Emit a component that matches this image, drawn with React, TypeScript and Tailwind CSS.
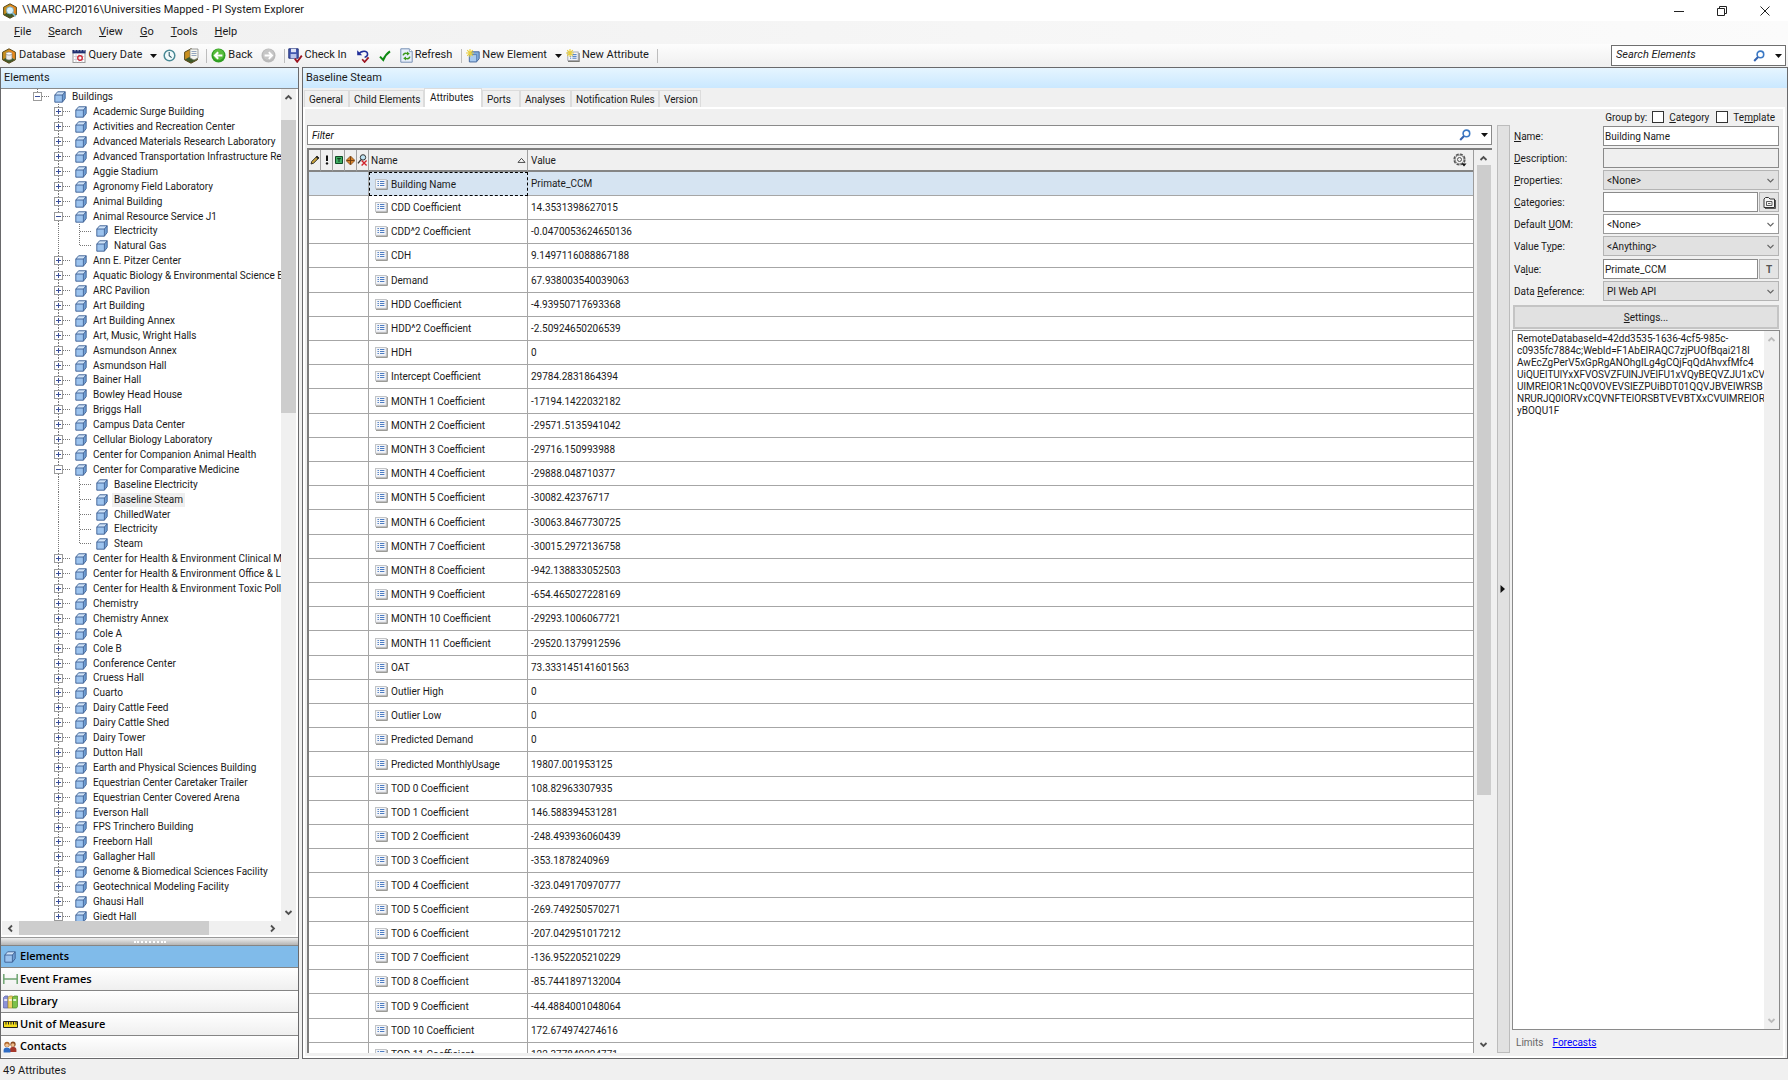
import type { ReactNode } from "react";

interface TreeItem {
  label: string;
  level?: 0 | 1 | 2;
  open?: boolean;
  last?: boolean;
  selected?: boolean;
}

const treeItems: TreeItem[] = [
  { label: "Buildings", level: 0, open: true },
  { label: "Academic Surge Building" },
  { label: "Activities and Recreation Center" },
  { label: "Advanced Materials Research Laboratory" },
  { label: "Advanced Transportation Infrastructure Research Center" },
  { label: "Aggie Stadium" },
  { label: "Agronomy Field Laboratory" },
  { label: "Animal Building" },
  { label: "Animal Resource Service J1", open: true },
  { label: "Electricity", level: 2 },
  { label: "Natural Gas", level: 2, last: true },
  { label: "Ann E. Pitzer Center" },
  { label: "Aquatic Biology & Environmental Science Building" },
  { label: "ARC Pavilion" },
  { label: "Art Building" },
  { label: "Art Building Annex" },
  { label: "Art, Music, Wright Halls" },
  { label: "Asmundson Annex" },
  { label: "Asmundson Hall" },
  { label: "Bainer Hall" },
  { label: "Bowley Head House" },
  { label: "Briggs Hall" },
  { label: "Campus Data Center" },
  { label: "Cellular Biology Laboratory" },
  { label: "Center for Companion Animal Health" },
  { label: "Center for Comparative Medicine", open: true },
  { label: "Baseline Electricity", level: 2 },
  { label: "Baseline Steam", level: 2, selected: true },
  { label: "ChilledWater", level: 2 },
  { label: "Electricity", level: 2 },
  { label: "Steam", level: 2, last: true },
  { label: "Center for Health & Environment Clinical Medicine" },
  { label: "Center for Health & Environment Office & Laboratory" },
  { label: "Center for Health & Environment Toxic Pollutant" },
  { label: "Chemistry" },
  { label: "Chemistry Annex" },
  { label: "Cole A" },
  { label: "Cole B" },
  { label: "Conference Center" },
  { label: "Cruess Hall" },
  { label: "Cuarto" },
  { label: "Dairy Cattle Feed" },
  { label: "Dairy Cattle Shed" },
  { label: "Dairy Tower" },
  { label: "Dutton Hall" },
  { label: "Earth and Physical Sciences Building" },
  { label: "Equestrian Center Caretaker Trailer" },
  { label: "Equestrian Center Covered Arena" },
  { label: "Everson Hall" },
  { label: "FPS Trinchero Building" },
  { label: "Freeborn Hall" },
  { label: "Gallagher Hall" },
  { label: "Genome & Biomedical Sciences Facility" },
  { label: "Geotechnical Modeling Facility" },
  { label: "Ghausi Hall" },
  { label: "Giedt Hall" },
];

const attributes: [string, string][] = [
  ["Building Name", "Primate_CCM"],
  ["CDD Coefficient", "14.3531398627015"],
  ["CDD^2 Coefficient", "-0.0470053624650136"],
  ["CDH", "9.1497116088867188"],
  ["Demand", "67.938003540039063"],
  ["HDD Coefficient", "-4.93950717693368"],
  ["HDD^2 Coefficient", "-2.50924650206539"],
  ["HDH", "0"],
  ["Intercept Coefficient", "29784.2831864394"],
  ["MONTH 1 Coefficient", "-17194.1422032182"],
  ["MONTH 2 Coefficient", "-29571.5135941042"],
  ["MONTH 3 Coefficient", "-29716.150993988"],
  ["MONTH 4 Coefficient", "-29888.048710377"],
  ["MONTH 5 Coefficient", "-30082.42376717"],
  ["MONTH 6 Coefficient", "-30063.8467730725"],
  ["MONTH 7 Coefficient", "-30015.2972136758"],
  ["MONTH 8 Coefficient", "-942.138833052503"],
  ["MONTH 9 Coefficient", "-654.465027228169"],
  ["MONTH 10 Coefficient", "-29293.1006067721"],
  ["MONTH 11 Coefficient", "-29520.1379912596"],
  ["OAT", "73.333145141601563"],
  ["Outlier High", "0"],
  ["Outlier Low", "0"],
  ["Predicted Demand", "0"],
  ["Predicted MonthlyUsage", "19807.001953125"],
  ["TOD 0 Coefficient", "108.82963307935"],
  ["TOD 1 Coefficient", "146.588394531281"],
  ["TOD 2 Coefficient", "-248.493936060439"],
  ["TOD 3 Coefficient", "-353.1878240969"],
  ["TOD 4 Coefficient", "-323.049170970777"],
  ["TOD 5 Coefficient", "-269.749250570271"],
  ["TOD 6 Coefficient", "-207.042951017212"],
  ["TOD 7 Coefficient", "-136.952205210229"],
  ["TOD 8 Coefficient", "-85.7441897132004"],
  ["TOD 9 Coefficient", "-44.4884001048064"],
  ["TOD 10 Coefficient", "172.674974274616"],
  ["TOD 11 Coefficient", "122.377849224771"],
];

const configString = `RemoteDatabaseId=42dd3535-1636-4cf5-985c-
c0935fc7884c;WebId=F1AbEIRAQC7zjPUOfBqai218I
AwEcZgPerV5xGpRgANOhgILg4gCQjFqQdAhvxfMfc4
UiQUElTUlYxXFVOSVZFUlNJVElFU1xVQyBEQVZJU1xCV
UlMRElOR1NcQ0VOVEVSIEZPUiBDT01QQVJBVElWRSB
NRURJQ0lORVxCQVNFTElORSBTVEVBTXxCVUlMRElOR
yBOQU1F`;

/* ---------- Icons ---------- */

function HexIcon({ variant = "db" }: { variant?: "app" | "db" | "doc" }) {
  return (
    <svg width="16" height="16" viewBox="0 0 16 16" className="shrink-0">
      <path d="M8 .8 1.6 4.2v7.6L8 15.2V8z" fill="#c98f1e" />
      <path d="M8 .8l6.4 3.4v7.6L8 8z" fill={variant === "doc" ? "#3d8a52" : "#e8891c"} />
      <path d="M1.6 11.8 8 15.2l6.4-3.4L8 8z" fill="#3f5a2a" />
      <path d="M8 .8 1.6 4.2v7.6L8 15.2l6.4-3.4V4.2z" fill="none" stroke="#5a4a1c" strokeWidth="1" />
      {variant === "db" && (
        <>
          <path d="M5 6v4.6c0 .8 1.3 1.4 3 1.4s3-.6 3-1.4V6z" fill="#ececec" stroke="#777" strokeWidth=".6" />
          <ellipse cx="8" cy="5.6" rx="3" ry="1.5" fill="#fff" stroke="#777" strokeWidth=".6" />
        </>
      )}
      {variant === "app" && (
        <>
          <circle cx="8" cy="7.4" r="3.6" fill="#d8f1fb" stroke="#6aa3bd" strokeWidth=".8" />
          <path d="m10.6 10.2 3 3.2" stroke="#8ec1d8" strokeWidth="1.6" />
        </>
      )}
      {variant === "doc" && (
        <>
          <path d="M7 1h8v9l-4 2-4-2z" fill="#f6f6ee" stroke="#777" strokeWidth=".7" />
          <path d="M8.5 3.5h5M8.5 5.5h5M8.5 7.5h5" stroke="#7a8fb0" strokeWidth=".8" />
        </>
      )}
    </svg>
  );
}

function CubeIcon() {
  return (
    <svg width="12" height="12" viewBox="0 0 12 12" className="shrink-0">
      <path d="M3.5.8h7.7v6.6L8.4 11V4z" fill="#6f9fd4" />
      <path d="M.8 4 3.6.8h7.6L8.4 4z" fill="#cfe3f8" />
      <path d="M.8 4h7.6v7.2H.8z" fill="#9cc3ee" />
      <path d="M.8 4 3.6.8h7.6v6.8l-2.8 3.6H.8zM.8 4h7.6v7.2M8.4 4 11.2.8" fill="none" stroke="#3c5f93" strokeWidth=".9" />
    </svg>
  );
}

function AttributeIcon() {
  return (
    <svg width="13" height="11" viewBox="0 0 13 11" className="shrink-0">
      <path d="M12 1v9H1" fill="none" stroke="#7b7b75" strokeWidth="1.4" />
      <rect x=".5" y=".5" width="10.8" height="8.8" fill="#f4f6fa" stroke="#c2c4c6" />
      <path d="M2.5 2.5h1.4M2.5 4.5h1.4M2.5 6.5h1.4M5 2.5h4.4M5 4.5h4.4M5 6.5h4.4" stroke="#4d7cc0" strokeWidth="1" />
    </svg>
  );
}

function CalendarIcon() {
  return (
    <svg width="14" height="14" viewBox="0 0 14 14" className="shrink-0">
      <rect x="1" y="1.5" width="12" height="12" fill="#fff" stroke="#9a9a9a" />
      <rect x=".5" y="1" width="13" height="3.4" fill="#1f2f70" />
      <path d="M3 .3v2M6 .3v2M9 .3v2M12 .3v2" stroke="#fff" strokeWidth=".8" />
      <path d="M1 7.5h12M1 10.5h12M4 4.5v9M7 4.5v9M10 4.5v9" stroke="#c6c6d2" strokeWidth=".8" />
      <circle cx="8" cy="9" r="2.3" fill="none" stroke="#d3202c" strokeWidth="1.3" />
    </svg>
  );
}

function ClockIcon() {
  return (
    <svg width="13" height="13" viewBox="0 0 13 13" className="shrink-0">
      <circle cx="6.5" cy="6.5" r="5.3" fill="#f3fbfc" stroke="#4a8a96" strokeWidth="1.5" />
      <path d="M6.2 3v3.7l2.4 2" fill="none" stroke="#2f5d6b" strokeWidth="1.1" />
    </svg>
  );
}

function ArrowCircle({ muted }: { muted?: boolean }) {
  return (
    <svg width="15" height="15" viewBox="0 0 15 15" className="shrink-0">
      <circle cx="7.5" cy="7.5" r="7" fill={muted ? "#b9b9b9" : "#2f9e22"} />
      <circle cx="7.5" cy="6.6" r="5.6" fill={muted ? "#c6c6c6" : "#59bd3c"} />
      {muted ? (
        <path d="M3.6 7.5h7.2M7.8 4.2l3.3 3.3-3.3 3.3" fill="none" stroke="#fff" strokeWidth="1.8" />
      ) : (
        <path d="M11.4 7.5H4.2M7.2 4.2 3.9 7.5l3.3 3.3" fill="none" stroke="#fff" strokeWidth="2" />
      )}
    </svg>
  );
}

function CheckInIcon() {
  return (
    <svg width="15" height="15" viewBox="0 0 15 15" className="shrink-0">
      <path d="M.8.8h9.4v9.4H.8z" fill="#4359b0" stroke="#26357c" />
      <path d="M3 .8h5v3.4H3z" fill="#dfe4f5" />
      <path d="M2.6 6h5.8v4.2H2.6z" fill="#b7c3ea" />
      <path d="m6.8 10.6 2.4 3.2 4.6-6.2" fill="none" stroke="#9c1420" strokeWidth="1.8" />
    </svg>
  );
}

function UndoIcon() {
  return (
    <svg width="14" height="14" viewBox="0 0 14 14" className="shrink-0">
      <path d="M1.2 1.2v5h5z" fill="#22309a" />
      <path d="M3 5C5 1.4 11.4 1 11.6 5c.1 2-1.6 3-3 3.4" fill="none" stroke="#22309a" strokeWidth="1.5" />
      <path d="m6.2 10.2 2.4 2.8 4-4.6" fill="none" stroke="#9c1420" strokeWidth="1.7" />
    </svg>
  );
}

function GreenCheck() {
  return (
    <svg width="12" height="12" viewBox="0 0 12 12" className="shrink-0">
      <path d="M1 6.6 4.2 10C5.6 6.6 8 3.4 11 1.4" fill="none" stroke="#0d8a12" strokeWidth="2" />
    </svg>
  );
}

function RefreshIcon() {
  return (
    <svg width="13" height="15" viewBox="0 0 13 15" className="shrink-0">
      <path d="M.8.8h8.6l2.8 2.8v10.6H.8z" fill="#e6eefb" stroke="#7790b4" />
      <path d="M9.4.8v2.8h2.8" fill="#fff" stroke="#7790b4" strokeWidth=".8" />
      <path d="M3.2 7.4C3.4 5.4 5.4 4.8 7.4 5.6" fill="none" stroke="#3d9a1d" strokeWidth="1.5" />
      <path d="m7 3.4 2.8 2.4L7 7.6z" fill="#3d9a1d" />
      <path d="M9.8 8.6c-.2 2-2.2 2.6-4.2 1.8" fill="none" stroke="#3d9a1d" strokeWidth="1.5" />
      <path d="M6 12.6 3.2 10.2 6 8.4z" fill="#3d9a1d" />
    </svg>
  );
}

function Spark() {
  return (
    <path d="M4 0v8M0 4h8M1.2 1.2l5.6 5.6M6.8 1.2 1.2 6.8" stroke="#e9cf3c" strokeWidth="1.1" />
  );
}

function NewElementIcon() {
  return (
    <svg width="14" height="14" viewBox="0 0 14 14" className="shrink-0">
      <path d="M3.4 5.6 6 2.8h7.2v6.8l-2.6 3.2H3.4z" fill="#7fadde" stroke="#3c5f93" strokeWidth=".9" />
      <path d="M3.4 5.6h7.2v7.2H3.4z" fill="#a9cbf0" stroke="#3c5f93" strokeWidth=".6" />
      <Spark />
    </svg>
  );
}

function NewAttributeIcon() {
  return (
    <svg width="14" height="13" viewBox="0 0 14 13" className="shrink-0">
      <path d="M13 4v8.2H2" fill="none" stroke="#7b7b75" strokeWidth="1.4" />
      <rect x="1.8" y="3" width="10.4" height="8.4" fill="#f4f6fa" stroke="#9fa2a8" strokeWidth=".9" />
      <path d="M4 5.6h1.2M4 7.4h1.2M4 9.2h1.2M6.4 5.6h4.2M6.4 7.4h4.2M6.4 9.2h4.2" stroke="#4d7cc0" />
      <Spark />
    </svg>
  );
}

function SearchIcon() {
  return (
    <svg width="12" height="12" viewBox="0 0 12 12" className="shrink-0">
      <circle cx="7.4" cy="4.4" r="3.3" fill="#fff" stroke="#3a78c4" strokeWidth="1.6" />
      <path d="M5 7 1.2 11" stroke="#3463b0" strokeWidth="2" />
    </svg>
  );
}

function CaretDown() {
  return (
    <svg width="7" height="4" viewBox="0 0 7 4" className="shrink-0">
      <path d="M0 0h7L3.5 4z" fill="#111" />
    </svg>
  );
}

function Chevron({ dir, color = "#505050", thick = 1.8 }: { dir: "up" | "down" | "left" | "right"; color?: string; thick?: number }) {
  const d = {
    up: "M1.5 6 4.5 3l3 3",
    down: "M1.5 3l3 3 3-3",
    left: "M6 1.5 3 4.5l3 3",
    right: "M3 1.5l3 3-3 3",
  }[dir];
  return (
    <svg width="9" height="9" viewBox="0 0 9 9" className="shrink-0">
      <path d={d} fill="none" stroke={color} strokeWidth={thick} />
    </svg>
  );
}

function GearIcon() {
  return (
    <svg width="14" height="14" viewBox="0 0 14 14">
      <circle cx="6.5" cy="6.5" r="5.4" fill="none" stroke="#555" strokeWidth="1.4" strokeDasharray="3 1.2" />
      <circle cx="6.5" cy="6.5" r="4.4" fill="none" stroke="#666" strokeWidth=".8" />
      <circle cx="6.5" cy="6.5" r="2" fill="none" stroke="#555" />
      <path d="M8.5 10.5h5L11 13.6z" fill="#111" />
    </svg>
  );
}

/* Dotted connector with the optional +/- box */
function Guide({ open, first }: { open?: boolean; first?: boolean }) {
  return (
    <svg width="17" height="15" viewBox="0 0 17 15" className="shrink-0" shapeRendering="crispEdges">
      <path d={first ? "M4.5 0v4" : "M4.5 0v15"} stroke="#777" strokeDasharray="1 1" />
      <path d="M9 7.5h7" stroke="#777" strokeDasharray="1 1" />
      <rect x=".5" y="3.5" width="8" height="8" fill="#fff" stroke="#9b9b9b" />
      <path d={open ? "M2 7.5h5" : "M2 7.5h5M4.5 5v5"} stroke="#3a4f9a" />
    </svg>
  );
}

function LeafGuide({ last }: { last?: boolean }) {
  return (
    <svg width="38" height="15" viewBox="0 0 38 15" className="shrink-0" shapeRendering="crispEdges">
      <path d="M4.5 0v15" stroke="#777" strokeDasharray="1 1" />
      <path d={last ? "M25.5 0v8" : "M25.5 0v15"} stroke="#777" strokeDasharray="1 1" />
      <path d="M26 7.5h11" stroke="#777" strokeDasharray="1 1" />
    </svg>
  );
}

/* ---------- Top bars ---------- */

function TitleBar() {
  return (
    <header className="flex h-[21px] items-center bg-white pl-[2px]">
      <HexIcon variant="app" />
      <h1 className="ml-1 text-[11px]">\\MARC-PI2016\Universities Mapped - PI System Explorer</h1>
      <div className="ml-auto flex pr-[2px]">
        <button aria-label="Minimize" className="flex h-5 w-[42px] items-center justify-center">
          <svg width="10" height="10" viewBox="0 0 10 10"><path d="M0 5.5h10" stroke="#222" /></svg>
        </button>
        <button aria-label="Restore" className="flex h-5 w-[43px] items-center justify-center">
          <svg width="10" height="10" viewBox="0 0 10 10" fill="none" stroke="#222">
            <path d="M.5 2.5h7v7h-7zM2.5 2.5v-2h7v7h-2" />
          </svg>
        </button>
        <button aria-label="Close" className="flex h-5 w-[43px] items-center justify-center">
          <svg width="10" height="10" viewBox="0 0 10 10"><path d="m.5.5 9 9m0-9-9 9" stroke="#222" /></svg>
        </button>
      </div>
    </header>
  );
}

function MenuBar() {
  const menus = ["File", "Search", "View", "Go", "Tools", "Help"];
  return (
    <nav className="flex h-[23px] items-center gap-[17px] bg-linear-to-r from-[#f0f0f0] to-[#fbfbfb] pl-[14px]">
      {menus.map((m) => (
        <button key={m}>
          <u>{m[0]}</u>
          {m.slice(1)}
        </button>
      ))}
    </nav>
  );
}

function ToolButton({ icon, children }: { icon: ReactNode; children?: ReactNode }) {
  return (
    <button className="flex items-center gap-[2px] whitespace-nowrap">
      {icon}
      {children}
    </button>
  );
}

function Divider() {
  return <div className="h-[14px] w-px bg-[#bdbdbd]" />;
}

function ToolBar() {
  return (
    <div className="flex h-[23px] items-center bg-linear-to-b from-[#fdfdfd] to-[#efefef] pr-[2px] pl-px">
      <ToolButton icon={<HexIcon />}>Database</ToolButton>
      <div className="ml-[7px] flex items-center gap-2">
        <ToolButton icon={<CalendarIcon />}>Query Date</ToolButton>
        <CaretDown />
      </div>
      <div className="ml-[6px] flex items-center gap-[7px]">
        <ToolButton icon={<ClockIcon />} />
        <ToolButton icon={<HexIcon variant="doc" />} />
        <Divider />
      </div>
      <div className="ml-1 flex items-center gap-2">
        <ToolButton icon={<ArrowCircle />}>Back</ToolButton>
        <ToolButton icon={<ArrowCircle muted />} />
        <Divider />
      </div>
      <div className="ml-[3px] flex items-center gap-[9px]">
        <ToolButton icon={<CheckInIcon />}>Check In</ToolButton>
        <ToolButton icon={<UndoIcon />} />
        <ToolButton icon={<GreenCheck />} />
        <ToolButton icon={<RefreshIcon />}>Refresh</ToolButton>
        <Divider />
      </div>
      <div className="ml-1 flex items-center gap-2">
        <ToolButton icon={<NewElementIcon />}>New Element</ToolButton>
        <CaretDown />
      </div>
      <div className="ml-1 flex items-center gap-2">
        <ToolButton icon={<NewAttributeIcon />}>New Attribute</ToolButton>
        <Divider />
      </div>
      <div className="ml-auto flex h-[21px] w-[175px] items-center gap-[10px] border border-[#6f6f6f] bg-white pr-[3px] pl-1">
        <input aria-label="Search Elements" placeholder="Search Elements" className="w-0 flex-1 italic outline-none placeholder:text-[#222] placeholder:italic" />
        <SearchIcon />
        <CaretDown />
      </div>
    </div>
  );
}

/* ---------- Left side ---------- */

function PanelTitle({ children }: { children: ReactNode }) {
  return (
    <h2 className="h-[20px] shrink-0 bg-linear-to-b from-[#e6f5ff] to-[#cae8ff] pl-[3px] leading-5">
      {children}
    </h2>
  );
}

function TreeRow({ label, level = 1, open, last, selected }: TreeItem) {
  return (
    <li
      className={`flex h-[15px] items-center whitespace-nowrap nth-[10n]:h-[14px] ${
        level === 0 ? "pl-[31px]" : "pl-[52px]"
      }`}
    >
      {level === 2 ? <LeafGuide last={last} /> : <Guide open={open} first={level === 0} />}
      <span className="ml-1">
        <CubeIcon />
      </span>
      <span className={`ml-1 px-[2px] leading-[14px] ${selected ? "bg-[#efefef]" : ""}`}>{label}</span>
    </li>
  );
}

const navButtons = [
  {
    label: "Elements",
    icon: <CubeIcon />,
  },
  {
    label: "Event Frames",
    icon: (
      <svg width="15" height="12" viewBox="0 0 15 12">
        <path d="M.8 1v10M14.2 1v10M1 6h13" stroke="#6fa572" strokeWidth="1.5" />
      </svg>
    ),
  },
  {
    label: "Library",
    icon: (
      <svg width="15" height="14" viewBox="0 0 15 14">
        <path d="M.5 2.5 2 1h3v12H.5z" fill="#8c93d8" stroke="#5c62a8" strokeWidth=".7" />
        <path d="M5 2.5 6.5 1h3v12H5z" fill="#ecd066" stroke="#a08a2e" strokeWidth=".7" />
        <path d="M9.5 2.5 11 1h3.5v10.5l-1 1.5h-4z" fill="#7dc04a" stroke="#4b8a24" strokeWidth=".7" />
        <path d="M1.2 5h3M5.8 5h3M10.2 5h3" stroke="#fff" strokeWidth="1.4" />
      </svg>
    ),
  },
  {
    label: "Unit of Measure",
    icon: (
      <svg width="15" height="7" viewBox="0 0 15 7">
        <path d="M.5.5h14v6H.5z" fill="#f2dc1c" stroke="#222" />
        <path d="M3 1v2.5M5.5 1v2.5M8 1v2.5M10.5 1v2.5M13 1v2.5" stroke="#222" />
      </svg>
    ),
  },
  {
    label: "Contacts",
    icon: (
      <svg width="14" height="12" viewBox="0 0 14 12">
        <path d="M7 11V8.4C7 6.6 8.4 6 10 6s3.4.6 3.4 2.6V11z" fill="#a5372b" />
        <circle cx="10" cy="3.2" r="2.6" fill="#8a4a22" />
        <circle cx="9.8" cy="4" r="1.7" fill="#f0bd8a" />
        <path d="M.6 11.6V9c0-1.8 1.4-2.6 3.2-2.6S7.4 7.2 7.4 9v2.6z" fill="#2f6cc4" />
        <circle cx="4" cy="3.4" r="2.7" fill="#b0672b" />
        <circle cx="4" cy="4.2" r="1.8" fill="#f3c597" />
      </svg>
    ),
  },
];

function ElementsPanel() {
  return (
    <aside className="flex w-[299px] shrink-0 flex-col border border-[#69696b] bg-white">
      <PanelTitle>Elements</PanelTitle>
      <div className="flex min-h-0 flex-1 border-t border-[#8a8a8a] pr-[2px] pb-[2px] pl-px">
        <div className="flex min-w-0 flex-1 flex-col">
          <ul className="min-h-0 flex-1 overflow-hidden text-[10px]">
            {treeItems.map((item, i) => (
              <TreeRow key={i} {...item} />
            ))}
          </ul>
          <div className="flex h-[14px] shrink-0 items-center bg-[#f0f0f0] pr-1 pl-1">
            <Chevron dir="left" />
            <div className="mr-auto ml-1 h-full w-[190px] bg-[#cdcdcd]" />
            <Chevron dir="right" />
          </div>
        </div>
        <div className="flex w-[15px] shrink-0 flex-col items-center bg-[#f0f0f0] pt-1 pb-[18px]">
          <Chevron dir="up" />
          <div className="mt-[18px] h-[293px] w-full bg-[#cdcdcd]" />
          <div className="mt-auto">
            <Chevron dir="down" />
          </div>
        </div>
      </div>
      <div className="flex h-[8px] shrink-0 items-center justify-center border-t border-[#999] bg-linear-to-b from-[#efefef] to-[#b4b4b4]">
        <div className="h-[2px] w-[32px] border-t-2 border-dotted border-white" />
      </div>
      <nav className="shrink-0 pb-px font-['Open_Sans',sans-serif]">
        {navButtons.map(({ label, icon }, i) => (
          <button
            key={label}
            className={`flex h-[22px] w-full items-center border-t border-[#858585] pl-px font-semibold text-black even:h-[23px] ${
              i === 0 ? "bg-[#80bbea]" : "bg-linear-to-b from-white to-[#efefef]"
            }`}
          >
            <span className="flex w-[18px] justify-center pr-[2px]">{icon}</span>
            {label}
          </button>
        ))}
      </nav>
    </aside>
  );
}

/* ---------- Attribute grid ---------- */

const tabs = [
  { label: "General", width: "w-[45px]" },
  { label: "Child Elements", width: "w-[75px]" },
  { label: "Attributes", width: "w-[58px]" },
  { label: "Ports", width: "w-[38px]" },
  { label: "Analyses", width: "w-[51px]" },
  { label: "Notification Rules", width: "w-[88px]" },
  { label: "Version", width: "w-[42px]" },
];

function Tabs() {
  return (
    <div role="tablist" className="flex h-[19px] shrink-0 items-end pl-px text-[10px]">
      {tabs.map(({ label, width }) => {
        const active = label === "Attributes";
        return (
          <button
            key={label}
            role="tab"
            aria-selected={active}
            className={`border-x border-t border-[#dcdcdc] text-left whitespace-nowrap ${width} ${
              active ? "h-[19px] bg-white pb-[2px] pl-[5px]" : "h-[17px] bg-[#f0f0f0] pl-1"
            }`}
          >
            {label}
          </button>
        );
      })}
    </div>
  );
}

function FilterBox() {
  return (
    <div className="flex h-[20px] shrink-0 items-center gap-[10px] border border-[#8a8a8a] bg-white pr-[3px] pl-1">
      <input aria-label="Filter" placeholder="Filter" className="w-0 flex-1 text-[10px] italic outline-none placeholder:text-[#111] placeholder:italic" />
      <SearchIcon />
      <CaretDown />
    </div>
  );
}

const flagIcons = [
  <svg key="edit" width="10" height="10" viewBox="0 0 10 10">
    <path d="m1 9 .8-2.6L7 1.2 8.8 3 3.6 8.2z" fill="#c9a33a" stroke="#222" strokeWidth=".9" />
    <path d="M6.4 1.4 8.6 3.6" stroke="#222" strokeWidth="1.8" />
  </svg>,
  <svg key="bang" width="4" height="10" viewBox="0 0 4 10">
    <path d="M2 .5v5.6" stroke="#111" strokeWidth="2" />
    <circle cx="2" cy="8.4" r="1.2" fill="#111" />
  </svg>,
  <svg key="template" width="8" height="8" viewBox="0 0 8 8">
    <path d="M.5.5h7v7h-7z" fill="#3fae62" stroke="#0f4a24" />
    <path d="M2.2 2.6h3.6M4 2.6V6" stroke="#0f3a1c" />
  </svg>,
  <svg key="move" width="9" height="9" viewBox="0 0 9 9">
    <path d="M4.5 0 9 4.5 4.5 9 0 4.5z" fill="#d8832c" stroke="#6a3c12" strokeWidth=".7" />
    <path d="M.5 4.5h8M4.5.5v8" stroke="#6a3c12" strokeWidth=".9" />
  </svg>,
  <svg key="hidden" width="11" height="12" viewBox="0 0 11 12">
    <circle cx="6" cy="3.4" r="2.7" fill="#bfe4f4" stroke="#333" />
    <path d="M4 5.6 1 9.4" stroke="#333" strokeWidth="1.4" />
    <path d="m4.6 6.6 5 4.8m0-4.8-5 4.8" stroke="#d3242c" strokeWidth="1.4" />
  </svg>,
];

function AttributeTable() {
  return (
    <div className="flex min-h-0 flex-1 border-t-2 border-l-2 border-[#7d7d7d] bg-[#f0f0f0]">
      <div className="min-w-0 flex-1 overflow-hidden">
        <table className="w-full table-fixed border-separate border-spacing-0 border-r border-[#9c9c9c] bg-white text-[10px]">
          <thead>
            <tr className="h-[22px] bg-[#f0f0f0] text-left">
              {flagIcons.map((icon) => (
                <th key={icon.key} className="w-[12px] border-r border-b-2 border-[#a0a0a0] border-b-[#858585] p-0">
                  <span className="flex justify-center">{icon}</span>
                </th>
              ))}
              <th className="w-[159px] border-r border-b-2 border-[#a0a0a0] border-b-[#858585] p-0 pl-[2px] font-normal">
                <div className="flex items-center justify-between pr-px">
                  Name
                  <svg width="9" height="6" viewBox="0 0 9 6"><path d="m1 5.4 3.5-4 3.5 4z" fill="#fff" stroke="#333" strokeWidth=".9" /></svg>
                </div>
              </th>
              <th className="border-b-2 border-[#858585] p-0 pl-[3px] font-normal">
                <div className="flex items-center justify-between pr-[6px]">
                  Value
                  <GearIcon />
                </div>
              </th>
            </tr>
          </thead>
          <tbody>
            {attributes.map(([name, value], i) => (
              <tr key={name} className={`h-[24px] nth-[5n]:h-[25px] ${i === 0 ? "bg-[#d6e4f2]" : ""}`}>
                <td colSpan={5} className="border-r border-b border-[#a6a6a6] p-0" />
                <td className={`p-0 ${i === 0 ? "border border-dashed border-black pl-[5px]" : "border-r border-b border-[#a6a6a6] pl-[6px]"}`}>
                  <div className="flex items-center gap-[3px] whitespace-nowrap">
                    <AttributeIcon />
                    {name}
                  </div>
                </td>
                <td className="border-b border-[#a6a6a6] p-0 pl-[3px]">{value}</td>
              </tr>
            ))}
          </tbody>
        </table>
      </div>
      <div className="ml-px flex w-[17px] shrink-0 flex-col items-center pt-1 pb-1">
        <Chevron dir="up" />
        <div className="mt-[2px] h-[630px] w-[14px] bg-[#cdcdcd]" />
        <div className="mt-auto">
          <Chevron dir="down" />
        </div>
      </div>
    </div>
  );
}

/* ---------- Details form ---------- */

function Field({ id, label, children }: { id: string; label: ReactNode; children: ReactNode }) {
  return (
    <div className="flex h-5 items-center">
      <label htmlFor={id} className="w-[90px] shrink-0 pl-px">
        {label}
      </label>
      {children}
    </div>
  );
}

function SelectBox({ id, value, white }: { id: string; value: string; white?: boolean }) {
  return (
    <div className="relative h-5 flex-1">
      <select
        id={id}
        className={`h-full w-full appearance-none border pl-[3px] ${
          white ? "border-[#9a9a9a] bg-white" : "border-[#b4b4b4] bg-[#e1e1e1]"
        }`}
      >
        <option>{value}</option>
      </select>
      <span className="pointer-events-none absolute top-[6px] right-1">
        <Chevron dir="down" color="#666" thick={1.1} />
      </span>
    </div>
  );
}

function DetailsForm() {
  const input = "h-5 min-w-0 flex-1 border border-[#8a8a8a] px-px outline-none";
  return (
    <form className="flex w-[272px] shrink-0 flex-col text-[10px]">
      <div className="mb-px flex h-4 items-center justify-end gap-[5px] pr-2">
        <span>Group by:</span>
        <input id="category" type="checkbox" className="size-3 appearance-none border border-[#333] bg-white" />
        <label htmlFor="category" className="mr-[2px]"><u>C</u>ategory</label>
        <input id="template" type="checkbox" className="size-3 appearance-none border border-[#333] bg-white" />
        <label htmlFor="template">Te<u>m</u>plate</label>
      </div>
      <div className="flex flex-col gap-[2px] pr-[4px] pl-[2px]">
        <Field id="name" label={<><u>N</u>ame:</>}>
          <input id="name" defaultValue="Building Name" className={`${input} bg-white`} />
        </Field>
        <Field id="description" label={<><u>D</u>escription:</>}>
          <input id="description" className={`${input} bg-[#efefef]`} />
        </Field>
        <Field id="properties" label={<><u>P</u>roperties:</>}>
          <SelectBox id="properties" value="<None>" />
        </Field>
        <Field id="categories" label={<><u>C</u>ategories:</>}>
          <input id="categories" className={`${input} bg-white`} />
          <button type="button" aria-label="Select categories" className="ml-px flex size-5 items-center justify-center border border-[#b4b4b4] bg-[#e4e4e4]">
            <svg width="13" height="13" viewBox="0 0 13 13" fill="none" stroke="#333">
              <path d="M1 11.5V3l1.5-1.5h3L7 3h4.5v8.5z" fill="#f4f4f4" />
              <path d="M3.5 5.5h5.5v4H3.5zM5 7.5h2.5M12.5 4v8.5H2" strokeWidth=".8" />
            </svg>
          </button>
        </Field>
        <Field id="uom" label={<>Default <u>U</u>OM:</>}>
          <SelectBox id="uom" value="<None>" white />
        </Field>
        <Field id="type" label={<>Value T<u>y</u>pe:</>}>
          <SelectBox id="type" value="<Anything>" />
        </Field>
      </div>
      <div className="mt-[3px] flex flex-col gap-[2px] pr-[4px] pl-[2px]">
        <Field id="value" label={<>Va<u>l</u>ue:</>}>
          <input id="value" defaultValue="Primate_CCM" className={`${input} bg-white`} />
          <button type="button" className="ml-px size-5 border border-[#b4b4b4] bg-[#e4e4e4] font-bold text-[#555]">T</button>
        </Field>
        <Field id="reference" label={<>Data <u>R</u>eference:</>}>
          <SelectBox id="reference" value="PI Web API" />
        </Field>
      </div>
      <button type="button" className="mt-[4px] mr-1 ml-[2px] h-6 shrink-0 border-2 border-[#c4c4c4] bg-[#e1e1e1]">
        <u>S</u>ettings...
      </button>
      <div className="mt-px mr-[3px] ml-px flex min-h-0 flex-1 border border-[#8a8a8a] bg-white">
        <textarea
          aria-label="Configuration string"
          readOnly
          value={configString}
          className="w-0 flex-1 resize-none overflow-hidden py-[2px] pl-1 leading-3 whitespace-pre outline-none"
        />
        <div className="flex w-[15px] flex-col items-center justify-between bg-[#f0f0f0] py-1">
          <Chevron dir="up" color="#bbb" />
          <Chevron dir="down" color="#bbb" />
        </div>
      </div>
      <div className="flex h-[26px] shrink-0 items-center gap-[9px] pb-[2px] pl-[5px]">
        <span className="text-[#666]">Limits</span>
        <a href="#forecasts" className="text-[#0000ff] underline">Forecasts</a>
      </div>
    </form>
  );
}

export default function App() {
  return (
    <div className="flex h-screen flex-col overflow-hidden bg-[#f0f0f0] font-[Roboto,sans-serif] text-[11px] text-[#1a1a1a]">
      <TitleBar />
      <MenuBar />
      <ToolBar />
      <main className="flex min-h-0 flex-1 gap-[3px] pb-px">
        <ElementsPanel />
        <section className="flex min-w-0 flex-1 flex-col border border-[#69696b] bg-[#f0f0f0]">
          <PanelTitle>Baseline Steam</PanelTitle>
          <Tabs />
          <div className="mr-[2px] flex min-h-0 flex-1 border-2 border-white pl-[2px]">
            <div className="flex min-w-0 flex-1 flex-col gap-[3px] pt-4 pb-[3px]">
              <FilterBox />
              <AttributeTable />
            </div>
            <div className="mt-4 mb-[3px] ml-[5px] flex w-[13px] shrink-0 items-center border border-[#bcbcbc] bg-[#e1e1e1] pl-[2px]">
              <svg width="5" height="8" viewBox="0 0 5 8"><path d="M.5 0v8L5 4z" fill="#111" /></svg>
            </div>
            <div className="ml-px flex">
              <DetailsForm />
            </div>
          </div>
        </section>
      </main>
      <footer className="h-[20px] shrink-0 pl-[3px] leading-[22px]">49 Attributes</footer>
    </div>
  );
}
